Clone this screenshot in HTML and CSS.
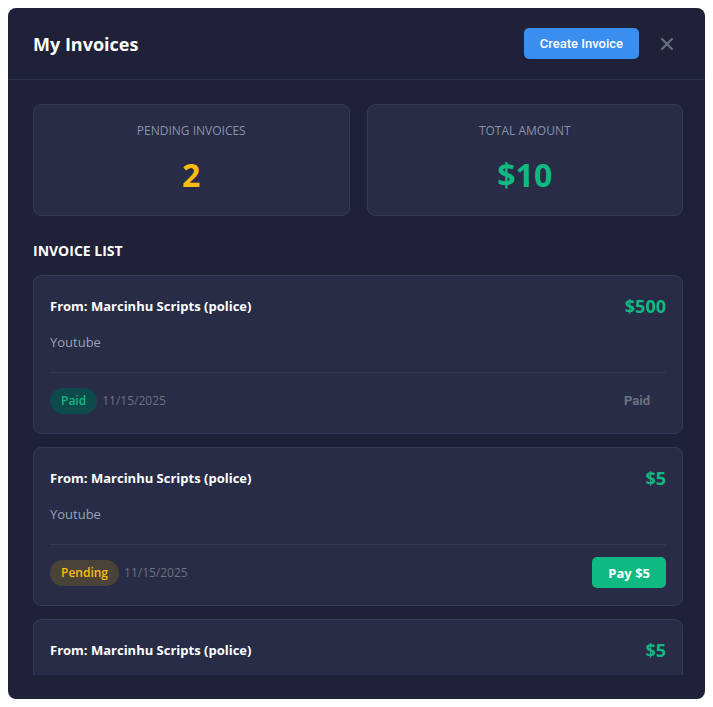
FILE: index.html
```html
<!DOCTYPE html>
<html lang="en">
<head>
<meta charset="utf-8">
<title>My Invoices</title>
<link rel="stylesheet" href="styles.css">
</head>
<body>
<div class="modal">
  <header class="modal-header">
    <h1 class="title">My Invoices</h1>
    <div class="header-actions">
      <button class="btn btn-primary">Create Invoice</button>
      <button class="close-btn" aria-label="Close">
        <svg width="12" height="12" viewBox="0 0 12 12"><path d="M1 1L11 11M11 1L1 11" stroke="#6b7280" stroke-width="2" stroke-linecap="round"/></svg>
      </button>
    </div>
  </header>
  <div class="modal-body">
    <div class="stats">
      <div class="stat-card">
        <div class="stat-label">Pending Invoices</div>
        <div class="stat-value yellow">2</div>
      </div>
      <div class="stat-card">
        <div class="stat-label">Total Amount</div>
        <div class="stat-value green">$10</div>
      </div>
    </div>
    <h2 class="section-title">Invoice List</h2>
    <div class="invoice-list">
      <div class="invoice">
        <div class="invoice-top">
          <div class="invoice-from">From: Marcinhu Scripts (police)</div>
          <div class="invoice-amount">$500</div>
        </div>
        <div class="invoice-desc">Youtube</div>
        <div class="invoice-footer">
          <div class="meta">
            <span class="badge badge-paid">Paid</span>
            <span class="date">11/15/2025</span>
          </div>
          <span class="status-paid">Paid</span>
        </div>
      </div>
      <div class="invoice">
        <div class="invoice-top">
          <div class="invoice-from">From: Marcinhu Scripts (police)</div>
          <div class="invoice-amount">$5</div>
        </div>
        <div class="invoice-desc">Youtube</div>
        <div class="invoice-footer">
          <div class="meta">
            <span class="badge badge-pending">Pending</span>
            <span class="date">11/15/2025</span>
          </div>
          <button class="btn btn-pay">Pay $5</button>
        </div>
      </div>
      <div class="invoice">
        <div class="invoice-top">
          <div class="invoice-from">From: Marcinhu Scripts (police)</div>
          <div class="invoice-amount">$5</div>
        </div>
        <div class="invoice-desc">Youtube</div>
        <div class="invoice-footer">
          <div class="meta">
            <span class="badge badge-pending">Pending</span>
            <span class="date">11/15/2025</span>
          </div>
          <button class="btn btn-pay">Pay $5</button>
        </div>
      </div>
    </div>
  </div>
</div>
</body>
</html>
```
FILE: styles.css
```css
* { box-sizing: border-box; }
html, body { background: #ffffff; }
body {
  margin: 8px;
  font-family: "Open Sans", "Noto Sans", sans-serif;
  color: #ffffff;
}
.modal {
  width: 697px;
  height: 691px;
  background: #1e2137;
  border-radius: 8px;
  display: flex;
  flex-direction: column;
  overflow: hidden;
  padding-bottom: 24px;
}
.modal-header {
  display: flex;
  align-items: center;
  justify-content: space-between;
  padding: 20px 26px 20px 25px;
  border-bottom: 1px solid #2e3249;
  flex-shrink: 0;
}
.title {
  margin: 0;
  font-size: 18px;
  font-weight: 700;
  color: #ffffff;
}
.header-actions {
  display: flex;
  align-items: center;
}
.btn {
  border: none;
  border-radius: 5px;
  height: 31px;
  padding: 0 16px;
  color: #ffffff;
  cursor: pointer;
}
.btn-primary {
  background: #3a8ef0;
  font-family: Roboto, "Liberation Sans", sans-serif;
  font-size: 13px;
  font-weight: 500;
}
.close-btn {
  width: 24px;
  height: 24px;
  margin-left: 16px;
  padding: 0;
  border: none;
  background: transparent;
  display: flex;
  align-items: center;
  justify-content: center;
}
.modal-body {
  flex: 1;
  overflow: hidden;
  padding: 24px 22px 0 25px;
}
.stats {
  display: grid;
  grid-template-columns: 1fr 1fr;
  gap: 17px;
}
.stat-card {
  background: #282c46;
  border: 1px solid #353a56;
  border-radius: 8px;
  padding: 18px 16px 18px;
  text-align: center;
}
.stat-label {
  font-size: 12px;
  line-height: 16px;
  color: #8b91a7;
  text-transform: uppercase;
  margin-bottom: 14px;
}
.stat-value {
  font-size: 32px;
  font-weight: 700;
  line-height: 44px;
}
.yellow { color: #fbbc0e; }
.green { color: #10b981; }
.section-title {
  margin: 26px 0 15px;
  font-size: 14px;
  line-height: 18px;
  font-weight: 700;
  text-transform: uppercase;
  color: #ffffff;
}
.invoice-list {
  display: flex;
  flex-direction: column;
  gap: 13px;
}
.invoice {
  background: #282c46;
  border: 1px solid #353a56;
  border-radius: 8px;
  padding: 17px 16px 17px;
  flex-shrink: 0;
}
.invoice-top {
  display: flex;
  align-items: center;
  justify-content: space-between;
  height: 25px;
}
.invoice-from {
  font-size: 13px;
  font-weight: 700;
  color: #ffffff;
}
.invoice-amount {
  font-size: 18px;
  font-weight: 700;
  color: #10b981;
}
.invoice-desc {
  margin: 15px 0 21px;
  font-size: 13px;
  line-height: 18px;
  color: #9ca0b4;
}
.invoice-footer {
  display: flex;
  align-items: center;
  justify-content: space-between;
  border-top: 1px solid #343955;
  padding-top: 12px;
  height: 44px;
}
.meta {
  display: flex;
  align-items: center;
  gap: 5px;
}
.badge {
  display: inline-flex;
  align-items: center;
  height: 26px;
  padding: 0 11px;
  border-radius: 13px;
  font-size: 12px;
  font-weight: 600;
}
.badge-paid {
  background: #0d4a4b;
  color: #10b981;
}
.badge-pending {
  background: #4a4339;
  color: #fbbc0e;
}
.date {
  font-size: 12px;
  color: #6b7280;
}
.status-paid {
  padding: 0 16px;
  font-family: Roboto, "Liberation Sans", sans-serif;
  font-size: 13px;
  font-weight: 700;
  color: #6b7280;
}
.btn-pay {
  background: #10b981;
  font-family: "Open Sans", sans-serif;
  font-size: 13px;
  font-weight: 700;
}
```
